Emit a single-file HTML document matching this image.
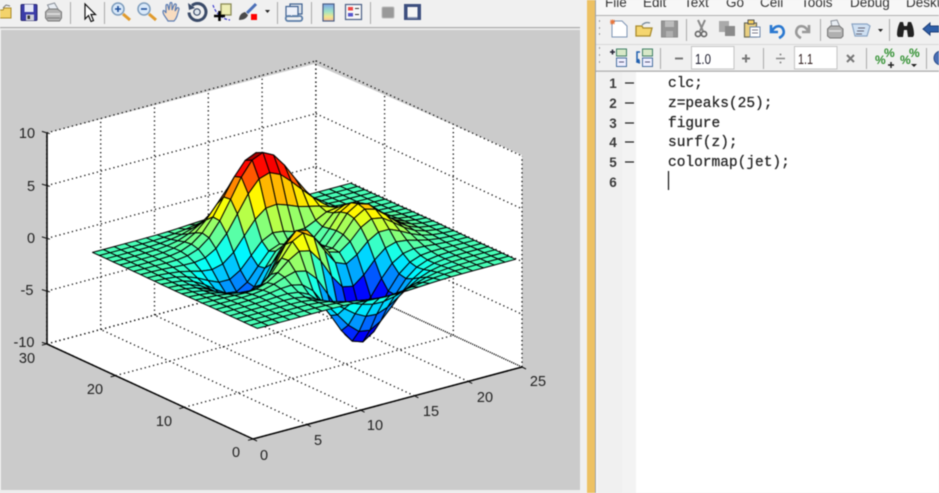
<!DOCTYPE html>
<html><head><meta charset="utf-8"><style>
html,body{margin:0;padding:0;width:939px;height:493px;overflow:hidden;background:#f0f0f0}
#root{position:absolute;left:0;top:0;width:939px;height:493px;filter:blur(.45px)}
svg{position:absolute;left:0;top:0}
text{font-family:"Liberation Sans",sans-serif}
.ax{font-size:14.5px;fill:#222;text-anchor:middle}
.mn{font-size:13.5px;fill:#333}
.cd{font-family:"Liberation Mono",monospace;font-size:14.5px;fill:#222;stroke:#222;stroke-width:.25}
.ln{font-size:13.5px;fill:#3a3a3a;text-anchor:middle;font-weight:bold}
.grid{stroke:#000;stroke-width:1.3;stroke-dasharray:1.2 3.1;fill:none}
.sep{stroke:#a9a9a9;stroke-width:1}
.pc{font-size:12px;font-weight:bold;fill:#2f8f2f}
</style></head><body><div id="root">
<svg width="939" height="493" viewBox="0 0 939 493">
<defs><linearGradient id="cb" x1="0" y1="0" x2="0" y2="1"><stop offset="0" stop-color="#7fa6e8"/><stop offset=".45" stop-color="#9fe3c6"/><stop offset=".75" stop-color="#f3e78c"/><stop offset="1" stop-color="#f5b8a0"/></linearGradient></defs>
<rect x="0" y="0" width="580" height="27" fill="#f0f0f0"/>
<rect x="0" y="27" width="580" height="1.3" fill="#a8a8a8"/>
<rect x="0" y="28.3" width="580" height="1.7" fill="#ececec"/>
<rect x="1" y="30" width="579" height="460" fill="#cbcbcb"/>
<rect x="0" y="490" width="580" height="3" fill="#ededed"/>
<rect x="580" y="0" width="7" height="493" fill="#f0f0f0"/>
<rect x="587" y="0" width="8" height="493" fill="#edc163"/>
<rect x="595" y="0" width="1.5" height="493" fill="#9aa3ad"/>
<rect x="596" y="0" width="343" height="15" fill="#f7f7f7"/>
<rect x="596" y="15" width="343" height="1.3" fill="#b0b0b0"/>
<rect x="596" y="16" width="343" height="28" fill="#f0f0f0"/>
<rect x="596" y="44" width="343" height="1" fill="#d8d8d8"/>
<rect x="596" y="45" width="343" height="26" fill="#f0f0f0"/>
<rect x="596" y="70.5" width="343" height="1.3" fill="#b0b0b0"/>
<rect x="596" y="72" width="343" height="421" fill="#fff"/>
<rect x="597" y="72" width="25" height="421" fill="#f0f0f0"/>
<rect x="622" y="72" width="14" height="421" fill="#f3f3f3"/>
<text class="mn" x="605" y="7">File</text><text class="mn" x="643" y="7">Edit</text><text class="mn" x="684" y="7">Text</text><text class="mn" x="726" y="7">Go</text><text class="mn" x="760" y="7">Cell</text><text class="mn" x="801" y="7">Tools</text><text class="mn" x="850" y="7">Debug</text><text class="mn" x="906" y="7">Deskto</text>
<g>
<text class="ln" x="613" y="88">1</text><text class="ln" x="613" y="108">2</text><text class="ln" x="613" y="128">3</text><text class="ln" x="613" y="147">4</text><text class="ln" x="613" y="167">5</text><text class="ln" x="613" y="187">6</text>
<path d="M625 83h9M625 103h9M625 123h9M625 142h9M625 162h9" stroke="#222" stroke-width="1.200"/>
<text class="cd" x="668" y="87">clc;</text><text class="cd" x="668" y="107">z=peaks(25);</text><text class="cd" x="668" y="127">figure</text><text class="cd" x="668" y="146">surf(z);</text><text class="cd" x="668" y="166">colormap(jet);</text>
<path d="M668.500 171v19" stroke="#111" stroke-width="1.200"/>
</g>
<path d="M47 133L314 64L522 155V367L253 439L47 344Z" fill="#fff"/>
<g id="g" class="grid"></g>
<path d="M47 133V344L253 439L522 367" stroke="#000" stroke-width="1.500" fill="none"/>
<g id="t" stroke="#111" stroke-width="1" fill="none"></g>
<g id="s" stroke="#000" stroke-width="1" stroke-linejoin="round" transform="translate(.5 1)"></g>
<text class="ax" x="27" y="138">10</text><text class="ax" x="31" y="191">5</text><text class="ax" x="31" y="243">0</text><text class="ax" x="27" y="295">-5</text><text class="ax" x="24" y="347">-10</text>
<text class="ax" x="27" y="363">30</text><text class="ax" x="95" y="394">20</text><text class="ax" x="164" y="426">10</text><text class="ax" x="236" y="457">0</text>
<text class="ax" x="264" y="460">0</text><text class="ax" x="318" y="445">5</text><text class="ax" x="375" y="430">10</text><text class="ax" x="431" y="416">15</text><text class="ax" x="485" y="402">20</text><text class="ax" x="538" y="386">25</text>
<!-- left toolbar -->
<g>
<path d="M-1 10h4l1-2h7v10H-1z" fill="#f3d36b" stroke="#a98a2a"/><path d="M3 8l3-3 4 1" stroke="#777" fill="none"/>
<rect x="21" y="4.500" width="16" height="16" rx="1" fill="#3b3ca8" stroke="#2a2a70"/>
<rect x="24.500" y="4.500" width="9" height="7.500" fill="#e6e9f7"/><rect x="26" y="14.500" width="8" height="6" fill="#cfd0d8"/><rect x="27.500" y="15.500" width="2.500" height="3.500" fill="#333"/>
<path d="M47.500 5l7-2 3.500 6-7.500 2z" fill="#e8edf3" stroke="#8a9099"/>
<path d="M45.500 12l3-3h9l4 3v6l-2 3H48l-2.500-3z" fill="#b2b2b2" stroke="#787878"/><path d="M47 14h13" stroke="#e2e2e2" stroke-width="1.500"/><path d="M47 18h13" stroke="#7c7c7c"/>
<path d="M85 4v15l3.500-3.500 2.500 6 2.500-1-2.500-6h4.500z" fill="#fff" stroke="#111" stroke-width="1.200"/>
<circle cx="118" cy="9" r="6" fill="#d9e9fa" stroke="#7d9cbc" stroke-width="1.500"/><path d="M115 9h6M118 6v6" stroke="#1f4f9a" stroke-width="1.600"/><path d="M123 14l7 6" stroke="#e09a2c" stroke-width="3"/>
<circle cx="144" cy="9" r="6" fill="#d9e9fa" stroke="#7d9cbc" stroke-width="1.500"/><path d="M141 9h6" stroke="#1f4f9a" stroke-width="1.600"/><path d="M149 14l7 6" stroke="#e09a2c" stroke-width="3"/>
<path d="M168 21c-2-4-5-6-5-9s2-1 3 1l0-7c0-2 2-2 2 0l1 4 1-6c0-2 2-2 2 0l0 6 2-5c1-2 3-1 2 1l-1 5 2-3c1-1 2 0 2 1l-2 7c-1 3-2 4-3 5z" fill="#f8dcc0" stroke="#5b7db4" stroke-width="1.200"/>
<path d="M192 5.500a8.500 8.500 0 1 1-3 7" fill="none" stroke="#3a4a68" stroke-width="3"/><path d="M188 3l1 7 6-2z" fill="#3a4a68"/><circle cx="197" cy="12" r="3.200" fill="#dfe6ee" stroke="#3a4a68" stroke-width="1.200"/>
<rect x="221" y="4" width="10" height="11" fill="#eeeeb4" stroke="#8a8a55" stroke-width="1.300"/><path d="M213 5c2 7 8 14 17 15" stroke="#3a3acd" stroke-width="1.200" stroke-dasharray="3 1.500" fill="none"/><path d="M214 16h11M219.500 11v10" stroke="#000" stroke-width="2.600"/>
<path d="M256 4l-9 9" stroke="#4b6fb7" stroke-width="3"/><path d="M239 20c0-4 2-7 6-8l3 3c-1 3-4 5-9 5z" fill="#4a4a4a"/><rect x="251" y="14" width="6" height="6" fill="#f00"/>
<path d="M265 10h5l-2.500 3z" fill="#222"/>
<rect x="290" y="4" width="12" height="10" fill="#dde3ea" stroke="#3d5f8f" stroke-width="1.200"/><rect x="286" y="6.500" width="12" height="10" fill="#eef2fa" stroke="#3d5f8f" stroke-width="1.200"/><path d="M291 16h-3c-3 0-3 5 0 5h5M292 16h8c3 0 3 5 0 5h-7" stroke="#5a7da8" stroke-width="1.800" fill="none"/>
<rect x="323" y="4" width="11" height="17" fill="url(#cb)" stroke="#4b5f85" stroke-width="1.200"/>
<rect x="345.500" y="4.500" width="16" height="15" fill="#f7f7f7" stroke="#4a5f85" stroke-width="1.200"/><rect x="348" y="7" width="5" height="3.500" fill="#e44"/><rect x="348" y="13" width="5" height="3.500" fill="#55c"/><path d="M355 8.500h4M355 14.500h4" stroke="#333"/>
<rect x="382" y="7" width="12" height="11" rx="1.500" fill="#999" stroke="#bbb"/>
<rect x="404" y="4" width="17" height="16" fill="#3d4f7f"/><rect x="407.500" y="7" width="10" height="10" fill="#f5f5f5"/><rect x="407.500" y="17" width="10" height="1.500" fill="#8894b0"/>
<path class="sep" d="M70.500 2v22M104.500 2v22M277.500 2v22M311.500 2v22M370.500 2v22"/>
</g>
<!-- editor toolbar row 1 -->
<g>
<path d="M599 21h1M599 28h1M599 34h1M599 48h1M599 55h1M599 62h1" stroke="#888" stroke-width="1.500"/>
<path d="M612 21h10l5 5v11h-15z" fill="#fff" stroke="#7e95b5"/><path d="M610 22l5 0M612.500 19.500v5M610.500 20l4 4M614.500 20l-4 4" stroke="#e8743a" stroke-width="1"/>
<path d="M636 36V26h6l1 2h9l-2 8z" fill="#f5d670" stroke="#a88a2c" stroke-width="1.300"/><path d="M642 25c2-2 5-3 8-2" stroke="#7a8c9a" stroke-width="1.300" fill="none"/>
<rect x="661.500" y="21" width="16" height="16" fill="#959595" stroke="#888"/><rect x="665" y="21" width="9" height="6" fill="#bdbdbd"/><rect x="666" y="31" width="7" height="6" fill="#b0b0b0"/>
<path d="M698 20l5 11M705 20l-5 11" stroke="#888" stroke-width="2"/><circle cx="698" cy="34" r="2.600" fill="none" stroke="#666" stroke-width="1.600"/><circle cx="704" cy="34" r="2.600" fill="none" stroke="#666" stroke-width="1.600"/>
<rect x="719" y="21" width="10" height="11" fill="#aaa"/><rect x="725" y="26" width="10" height="10" fill="#8a8a8a"/>
<rect x="744.500" y="23" width="12" height="14" fill="#e9cf80" stroke="#6a6a55" stroke-width="1.200"/><rect x="748" y="20" width="6" height="4" fill="#f5d060" stroke="#555"/><rect x="750" y="27" width="10" height="10" fill="#fff" stroke="#6f87a9"/><path d="M752 30h6M752 33h6" stroke="#778"/>
<path d="M771 25v7h7M772 31c3-6 9-6 11-2s0 7-4 9" fill="none" stroke="#2a78d0" stroke-width="2.600"/>
<path d="M809 25v7h-7M808 31c-3-6-9-6-11-2s0 7 4 9" fill="none" stroke="#999" stroke-width="2.600"/>
<path d="M831 21l6-1 3 7-8 2z" fill="#e8edf3" stroke="#8a9099"/><path d="M827.500 29l3-3h9l3.500 3v7l-2 2h-11l-2.500-2z" fill="#b0b0b0" stroke="#777"/><path d="M829 31h12" stroke="#e2e2e2" stroke-width="1.500"/>
<path d="M852 24h15l3 2-3 10h-12z" fill="#cfe0f2" stroke="#8aa4c4" stroke-width="1.200"/><path d="M858 28h7M857 31h7M856 34h6" stroke="#667"/>
<path d="M878 29h5l-2.500 3z" fill="#222"/>
<path d="M897 35c0-5 1-9 3-13h3l1 4h3l1-4h3c2 4 3 8 3 13l-1 2h-5l-1-7h-3l-1 7h-5z" fill="#222"/>
<path d="M923 29l7-6v3h9v6h-9v3z" fill="#2f5fa8" stroke="#1d3e78"/>
<path class="sep" d="M686.500 19v22M820.500 19v22M889.500 19v22M660.500 48v21M763.500 48v21M866.500 48v21M926.500 48v21"/>
</g>
<!-- row 2 -->
<g>
<path d="M610 52h5M612.500 49.500v5" stroke="#223" stroke-width="1.500"/><rect x="616.500" y="49" width="10" height="7" fill="#d8e8c8" stroke="#3f7f66"/><rect x="616.500" y="58" width="10" height="8.500" fill="#eef" stroke="#4a70a0"/><path d="M619 62h5" stroke="#557"/>
<path d="M640 52h-3v9h3M639 59l-2 3 3 1" stroke="#1f5faf" stroke-width="1.500" fill="none"/><rect x="642.500" y="49" width="10" height="7" fill="#d8e8c8" stroke="#3f7f66"/><rect x="642.500" y="58" width="10" height="8.500" fill="#eef" stroke="#4a70a0"/><path d="M645 62h5" stroke="#557"/>
<path d="M675 58.500h8" stroke="#777" stroke-width="2"/>
<rect x="691.500" y="46.500" width="42.500" height="22.500" fill="#fff" stroke="#c4c4c4"/><text x="695" y="64" font-size="14.500" fill="#223" textLength="16" lengthAdjust="spacingAndGlyphs">1.0</text>
<path d="M742 58.500h8M746 54.500v8" stroke="#777" stroke-width="2"/>
<path d="M776 58.500h9" stroke="#888" stroke-width="1.500"/><circle cx="780.500" cy="54.500" r="1" fill="#888"/><circle cx="780.500" cy="62.500" r="1" fill="#888"/>
<rect x="794.500" y="46.500" width="42.500" height="22.500" fill="#fff" stroke="#c4c4c4"/><text x="798" y="64" font-size="14.500" fill="#322" textLength="15" lengthAdjust="spacingAndGlyphs">1.1</text>
<path d="M847 55l7 7M854 55l-7 7" stroke="#777" stroke-width="2"/>
<text class="pc" x="875" y="64">%</text><text class="pc" x="884" y="57">%</text>
<text class="pc" x="900" y="64">%</text><text class="pc" x="909" y="57">%</text>
<path d="M888 65h6M891 62v6" stroke="#222" stroke-width="1.500"/><path d="M911 64h6l-3 3z" fill="#222"/>
<circle cx="941" cy="58" r="7" fill="#4a6fb5" stroke="#2a4a85"/>
</g>
</svg>
</div>
<script>
(function(){
var NS='http://www.w3.org/2000/svg';
function P(x,y,z){return [253+x*10.76-y*6.87, 439-x*2.88-y*3.17-(z+10)*10.55];}
function el(p,n,a){var e=document.createElementNS(NS,n);for(var k in a)e.setAttribute(k,a[k]);p.appendChild(e);return e;}
function line(p,a,b){el(p,'line',{x1:a[0].toFixed(1),y1:a[1].toFixed(1),x2:b[0].toFixed(1),y2:b[1].toFixed(1)});}
var g=document.getElementById('g'),t=document.getElementById('t'),s=document.getElementById('s'),i,j;
for(i=0;i<=25;i+=5){line(g,P(i,0,-10),P(i,30,-10));line(g,P(i,30,-10),P(i,30,10));}
for(j=0;j<=30;j+=10){line(g,P(0,j,-10),P(25,j,-10));line(g,P(25,j,-10),P(25,j,10));}
for(i=-10;i<=10;i+=5){line(g,P(0,30,i),P(25,30,i));line(g,P(25,30,i),P(25,0,i));}
for(i=0;i<=25;i+=5){var a=P(i,0,-10);line(t,a,[a[0]+4,a[1]+2]);}
for(j=0;j<=30;j+=10){var b=P(0,j,-10);line(t,b,[b[0]-5,b[1]+1.3]);}
for(i=-10;i<=10;i+=5){var c=P(0,30,i);line(t,c,[c[0]-5,c[1]-1.5]);line(t,c,[c[0]+3,c[1]+.8]);}
var N=25,Z=[],mn=1e9,mx=-1e9,x,y;
for(j=0;j<N;j++){Z[j]=[];for(i=0;i<N;i++){x=-3+6*i/24;y=-3+6*j/24;
var z=3*(1-x)*(1-x)*Math.exp(-x*x-(y+1)*(y+1))-10*(x/5-x*x*x-Math.pow(y,5))*Math.exp(-x*x-y*y)-1/3*Math.exp(-(x+1)*(x+1)-y*y);
Z[j][i]=z;if(z<mn)mn=z;if(z>mx)mx=z;}}
function cl(v){return Math.max(0,Math.min(1,v));}
function jet(z){var k=Math.min(63,Math.floor((z-mn)/(mx-mn)*64));var v=(k+.5)/64;
return 'rgb('+Math.round(255*cl(Math.min(4*v-1.5,-4*v+4.5)))+','+Math.round(255*cl(Math.min(4*v-.5,-4*v+3.5)))+','+Math.round(255*cl(Math.min(4*v+.5,-4*v+2.5)))+')';}
for(j=N-2;j>=0;j--)for(i=N-2;i>=0;i--){
var p=[P(i+1,j+1,Z[j][i]),P(i+2,j+1,Z[j][i+1]),P(i+2,j+2,Z[j+1][i+1]),P(i+1,j+2,Z[j+1][i])];
el(s,'polygon',{points:p.map(function(q){return q[0].toFixed(1)+','+q[1].toFixed(1);}).join(' '),fill:jet(Z[j][i])});}
})();
</script>
</body></html>
